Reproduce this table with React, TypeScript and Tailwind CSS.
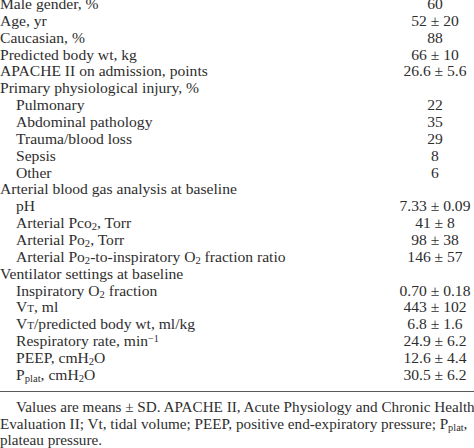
import React from "react";

type Row = {
  label: React.ReactNode;
  value?: string;
  sub?: boolean;
};

const Sc = ({ children }: { children: React.ReactNode }) => (
  <span className="[font-variant:small-caps]">{children}</span>
);

const Sub = ({ children }: { children: React.ReactNode }) => (
  <sub className="text-[0.68em] -bottom-[0.2em]">{children}</sub>
);

const rows: Row[] = [
  { label: "Male gender, %", value: "60" },
  { label: "Age, yr", value: "52 ± 20" },
  { label: "Caucasian, %", value: "88" },
  { label: "Predicted body wt, kg", value: "66 ± 10" },
  { label: "APACHE II on admission, points", value: "26.6 ± 5.6" },
  { label: "Primary physiological injury, %" },
  { label: "Pulmonary", value: "22", sub: true },
  { label: "Abdominal pathology", value: "35", sub: true },
  { label: "Trauma/blood loss", value: "29", sub: true },
  { label: "Sepsis", value: "8", sub: true },
  { label: "Other", value: "6", sub: true },
  { label: "Arterial blood gas analysis at baseline" },
  { label: "pH", value: "7.33 ± 0.09", sub: true },
  {
    label: (
      <>
        Arterial Pco<Sub>2</Sub>, Torr
      </>
    ),
    value: "41 ± 8",
    sub: true,
  },
  {
    label: (
      <>
        Arterial Po<Sub>2</Sub>, Torr
      </>
    ),
    value: "98 ± 38",
    sub: true,
  },
  {
    label: (
      <>
        Arterial Po<Sub>2</Sub>-to-inspiratory O<Sub>2</Sub> fraction ratio
      </>
    ),
    value: "146 ± 57",
    sub: true,
  },
  { label: "Ventilator settings at baseline" },
  {
    label: (
      <>
        Inspiratory O<Sub>2</Sub> fraction
      </>
    ),
    value: "0.70 ± 0.18",
    sub: true,
  },
  {
    label: (
      <>
        V<Sc>t</Sc>, ml
      </>
    ),
    value: "443 ± 102",
    sub: true,
  },
  {
    label: (
      <>
        V<Sc>t</Sc>/predicted body wt, ml/kg
      </>
    ),
    value: "6.8 ± 1.6",
    sub: true,
  },
  {
    label: (
      <>
        Respiratory rate, min<sup className="text-[0.65em] -top-[0.45em]">−1</sup>
      </>
    ),
    value: "24.9 ± 6.2",
    sub: true,
  },
  {
    label: (
      <>
        PEEP, cmH<Sub>2</Sub>O
      </>
    ),
    value: "12.6 ± 4.4",
    sub: true,
  },
  {
    label: (
      <>
        P<Sub>plat</Sub>, cmH<Sub>2</Sub>O
      </>
    ),
    value: "30.5 ± 6.2",
    sub: true,
  },
];

export default function App() {
  return (
    <div className="w-[474px] h-[448px] overflow-hidden bg-white text-[#2e2e2e] font-['Liberation_Serif','Times_New_Roman',serif] text-[15.6px] leading-[16.86px]">
      <div className="-mt-[4px]">
        {rows.map((r, i) => (
          <div key={i} className="flex items-baseline whitespace-nowrap">
            <div className={`flex-1 ${r.sub ? "pl-[16px]" : ""}`}>{r.label}</div>
            <div className="w-[78px] text-center">{r.value}</div>
          </div>
        ))}

        <div className="mt-[7px] h-[1.5px] bg-[#5a5a5a]" />

        <div className="mt-[7px] whitespace-nowrap text-[15.2px] leading-[16.6px]">
          <div className="pl-[16px]">
            Values are means ± SD. APACHE II, Acute Physiology and Chronic Health
          </div>
          <div>
            Evaluation II; Vt, tidal volume; PEEP, positive end-expiratory pressure; P<Sub>plat</Sub>,
          </div>
          <div>plateau pressure.</div>
        </div>
      </div>
    </div>
  );
}
